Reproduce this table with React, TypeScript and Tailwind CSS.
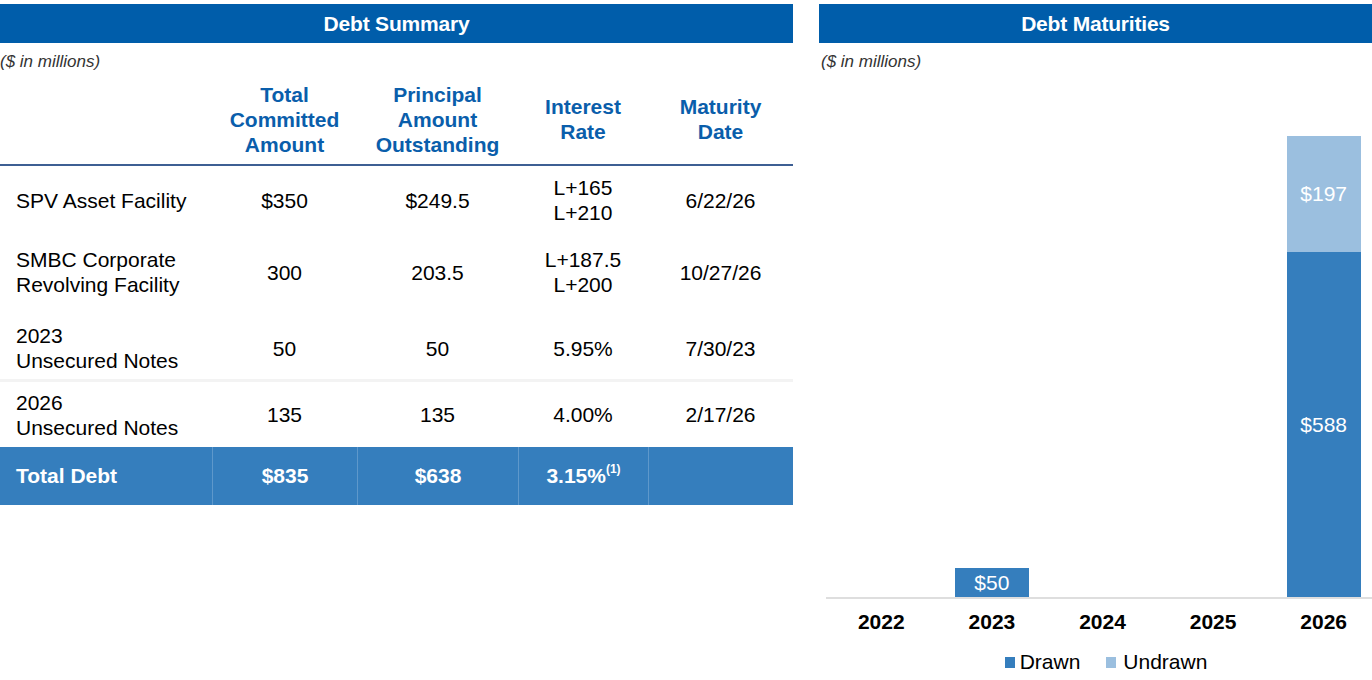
const rows = [
  { name: ["SPV Asset Facility"], committed: "$350", outstanding: "$249.5", rate: ["L+165", "L+210"], maturity: "6/22/26", h: "h-[68px]" },
  { name: ["SMBC Corporate", "Revolving Facility"], committed: "300", outstanding: "203.5", rate: ["L+187.5", "L+200"], maturity: "10/27/26", h: "h-[76px]" },
  { name: ["2023", "Unsecured Notes"], committed: "50", outstanding: "50", rate: ["5.95%"], maturity: "7/30/23", h: "h-[72px] pt-[7px] border-b-[3px] border-[#f3f3f3]" },
  { name: ["2026", "Unsecured Notes"], committed: "135", outstanding: "135", rate: ["4.00%"], maturity: "2/17/26", h: "h-[65px]" },
];

const maturities = [
  { year: "2022", drawn: 0, undrawn: 0 },
  { year: "2023", drawn: 50, undrawn: 0 },
  { year: "2024", drawn: 0, undrawn: 0 },
  { year: "2025", drawn: 0, undrawn: 0 },
  { year: "2026", drawn: 588, undrawn: 197 },
];

const cols = "grid grid-cols-[212px_145px_161px_130px_145px]";
const scale = 345 / 588;

function TitleBar({ title }: { title: string }) {
  return (
    <div className="flex h-[39px] items-center justify-center bg-[#005DAA] text-[21px] font-bold tracking-[-0.2px] text-white">
      {title}
    </div>
  );
}

function Subtitle({ className = "" }: { className?: string }) {
  return (
    <div className={`flex h-[36px] items-center pt-[2px] text-[17px] italic text-[#333] ${className}`}>($ in millions)</div>
  );
}

function DebtSummary() {
  return (
    <div className="w-[793px] shrink-0">
      <TitleBar title="Debt Summary" />
      <Subtitle />
      <div className={`${cols} h-[87px] items-center border-b-2 border-[#3d5f93] pb-[5px] text-center text-[21px] font-bold leading-[25px] text-[#0A5EAB]`}>
        <div />
        <div>Total<br />Committed<br />Amount</div>
        <div>Principal<br />Amount<br />Outstanding</div>
        <div>Interest<br />Rate</div>
        <div>Maturity<br />Date</div>
      </div>
      {rows.map((row) => (
        <div
          key={row.maturity}
          className={`${cols} ${row.h} items-center text-center text-[21px] leading-[25px] text-black`}
        >
          <div className="pl-[16px] text-left">
            {row.name.map((n) => (
              <div key={n}>{n}</div>
            ))}
          </div>
          <div>{row.committed}</div>
          <div>{row.outstanding}</div>
          <div>
            {row.rate.map((r) => (
              <div key={r}>{r}</div>
            ))}
          </div>
          <div>{row.maturity}</div>
        </div>
      ))}
      <div className={`${cols} h-[58px] items-stretch bg-[#357EBD] text-[21px] font-bold text-white`}>
        <div className="flex items-center pl-[16px]">Total Debt</div>
        <div className="flex items-center justify-center border-l border-[#5e98cb]">$835</div>
        <div className="flex items-center justify-center border-l border-[#5e98cb]">$638</div>
        <div className="flex items-center justify-center border-l border-[#5e98cb]">
          3.15%<sup className="relative -top-[7px] text-[12px] font-bold">(1)</sup>
        </div>
        <div className="border-l border-[#5e98cb]" />
      </div>
    </div>
  );
}

function DebtMaturities() {
  return (
    <div className="min-w-0 flex-1 overflow-hidden">
      <TitleBar title="Debt Maturities" />
      <Subtitle className="pl-[2px]" />
      <div className="ml-[7px] mt-[2px] w-[553px]">
        <div className="grid h-[518px] grid-cols-5 items-end border-b-2 border-[#dedede]">
          {maturities.map((m) => (
            <div key={m.year} className="flex flex-col items-center">
              {m.undrawn > 0 && (
                <div
                  className="flex w-[74px] items-center justify-center bg-[#9BBFDF] text-[21px] text-white"
                  style={{ height: m.undrawn * scale }}
                >
                  ${m.undrawn}
                </div>
              )}
              {m.drawn > 0 && (
                <div
                  className="flex w-[74px] items-center justify-center bg-[#357EBD] text-[21px] text-white"
                  style={{ height: m.drawn * scale }}
                >
                  ${m.drawn}
                </div>
              )}
            </div>
          ))}
        </div>
        <div className="mt-[11px] grid grid-cols-5 text-center text-[21px] font-bold leading-[24px] text-black">
          {maturities.map((m) => (
            <div key={m.year}>{m.year}</div>
          ))}
        </div>
        <div className="mt-[16px] flex items-center justify-center gap-[26px] pl-[7px] text-[21px] leading-[24px] text-black">
          <div className="flex items-center gap-[5px]">
            <span className="h-[11px] w-[10px] bg-[#357EBD]" />
            Drawn
          </div>
          <div className="flex items-center gap-[7px]">
            <span className="h-[11px] w-[10px] bg-[#9BBFDF]" />
            Undrawn
          </div>
        </div>
      </div>
    </div>
  );
}

export default function App() {
  return (
    <div className="flex h-[680px] w-[1372px] gap-[26px] overflow-hidden bg-white pt-[4px] font-['Liberation_Sans',Arial,sans-serif]">
      <DebtSummary />
      <DebtMaturities />
    </div>
  );
}
